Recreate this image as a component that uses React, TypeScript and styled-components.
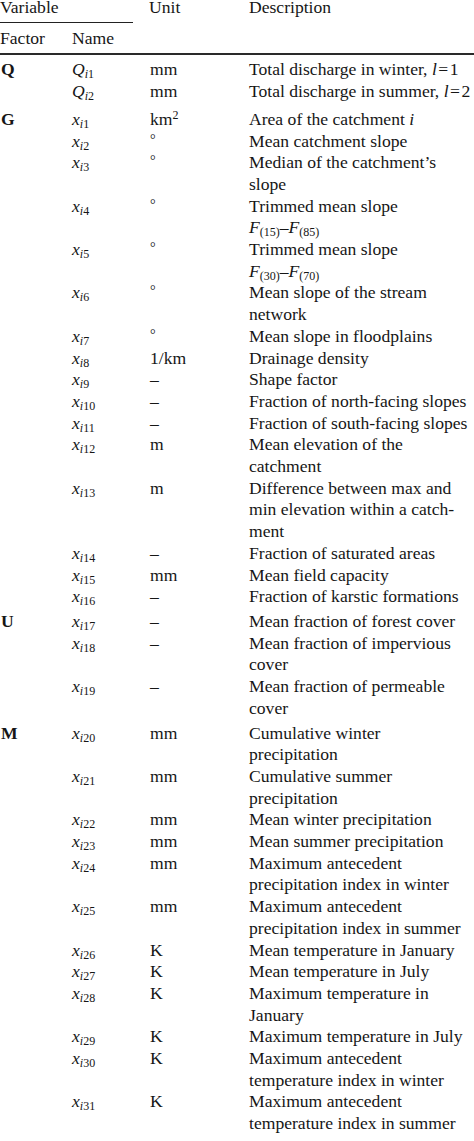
import React from 'react';
import styled, { createGlobalStyle } from 'styled-components';

const GlobalStyle = createGlobalStyle`
  html, body {
    margin: 0;
    padding: 0;
    background: #fff;
  }

  body {
    font-family: "Liberation Serif", "Times New Roman", serif;
    color: #161616;
    overflow: hidden;
  }
`;

const columns = '72px 77px 100px 1fr';

const Table = styled.div`
  width: 474px;
  font-size: 17.6px;
  line-height: 21.7px;
  margin-top: -3px;
`;

const Header = styled.div`
  display: grid;
  grid-template-columns: ${columns};
  border-bottom: 2px solid #2a2a2a;
  padding-bottom: 3px;
`;

const HeadCell = styled.div`
  white-space: nowrap;
  padding-bottom: 3.5px;
`;

const VariableHead = styled(HeadCell)`
  grid-column: 1 / 3;
  width: 133px;
  border-bottom: 1px solid #222;
  margin-bottom: 5px;
`;

const SubHead = styled.div`
  white-space: nowrap;
`;

const GroupBlock = styled.div<{ $gap: number }>`
  padding-top: ${(p) => p.$gap}px;
`;

const Row = styled.div`
  display: grid;
  grid-template-columns: ${columns};
  align-items: start;
`;

const Factor = styled.div`
  font-weight: bold;
  padding-left: 1px;
`;

const Name = styled.div`
  white-space: nowrap;
`;

const Unit = styled.div`
  padding-left: 1px;
  white-space: nowrap;
`;

const Degree = styled.span`
  font-size: 14px;
  line-height: 0;
  vertical-align: 3px;
`;

const Description = styled.div`
  display: flex;
  flex-direction: column;
`;

const Line = styled.span`
  white-space: nowrap;
`;

const It = styled.i`
  font-style: italic;
`;

const Sub = styled.sub`
  font-size: 12px;
  line-height: 0;
  vertical-align: -3px;
`;

const Sup = styled.sup`
  font-size: 12px;
  line-height: 0;
  vertical-align: 6px;
`;

const Eq = styled.span`
  margin: 0 1.5px;
`;

type Entry = {
  n: number;
  unit: React.ReactNode;
  desc: React.ReactNode[];
};

type Group = {
  factor: string;
  symbol: 'Q' | 'x';
  gap: number;
  rows: Entry[];
};

const deg = <Degree>°</Degree>;
const dash = '–';

const Fq = ({ q }: { q: string }) => (
  <>
    <It>F</It>
    <Sub>({q})</Sub>
  </>
);

const groups: Group[] = [
  {
    factor: 'Q',
    symbol: 'Q',
    gap: 4.5,
    rows: [
      {
        n: 1,
        unit: 'mm',
        desc: [
          <>
            Total discharge in winter, <It>l</It>
            <Eq>=</Eq>1
          </>,
        ],
      },
      {
        n: 2,
        unit: 'mm',
        desc: [
          <>
            Total discharge in summer, <It>l</It>
            <Eq>=</Eq>2
          </>,
        ],
      },
    ],
  },
  {
    factor: 'G',
    symbol: 'x',
    gap: 6,
    rows: [
      {
        n: 1,
        unit: (
          <>
            km<Sup>2</Sup>
          </>
        ),
        desc: [
          <>
            Area of the catchment <It>i</It>
          </>,
        ],
      },
      { n: 2, unit: deg, desc: ['Mean catchment slope'] },
      { n: 3, unit: deg, desc: ['Median of the catchment’s', 'slope'] },
      {
        n: 4,
        unit: deg,
        desc: [
          'Trimmed mean slope',
          <>
            <Fq q='15' />
            {dash}
            <Fq q='85' />
          </>,
        ],
      },
      {
        n: 5,
        unit: deg,
        desc: [
          'Trimmed mean slope',
          <>
            <Fq q='30' />
            {dash}
            <Fq q='70' />
          </>,
        ],
      },
      { n: 6, unit: deg, desc: ['Mean slope of the stream', 'network'] },
      { n: 7, unit: deg, desc: ['Mean slope in floodplains'] },
      { n: 8, unit: '1/km', desc: ['Drainage density'] },
      { n: 9, unit: dash, desc: ['Shape factor'] },
      { n: 10, unit: dash, desc: ['Fraction of north-facing slopes'] },
      { n: 11, unit: dash, desc: ['Fraction of south-facing slopes'] },
      { n: 12, unit: 'm', desc: ['Mean elevation of the', 'catchment'] },
      {
        n: 13,
        unit: 'm',
        desc: ['Difference between max and', 'min elevation within a catch-', 'ment'],
      },
      { n: 14, unit: dash, desc: ['Fraction of saturated areas'] },
      { n: 15, unit: 'mm', desc: ['Mean field capacity'] },
      { n: 16, unit: dash, desc: ['Fraction of karstic formations'] },
    ],
  },
  {
    factor: 'U',
    symbol: 'x',
    gap: 3,
    rows: [
      { n: 17, unit: dash, desc: ['Mean fraction of forest cover'] },
      { n: 18, unit: dash, desc: ['Mean fraction of impervious', 'cover'] },
      { n: 19, unit: dash, desc: ['Mean fraction of permeable', 'cover'] },
    ],
  },
  {
    factor: 'M',
    symbol: 'x',
    gap: 3,
    rows: [
      { n: 20, unit: 'mm', desc: ['Cumulative winter', 'precipitation'] },
      { n: 21, unit: 'mm', desc: ['Cumulative summer', 'precipitation'] },
      { n: 22, unit: 'mm', desc: ['Mean winter precipitation'] },
      { n: 23, unit: 'mm', desc: ['Mean summer precipitation'] },
      {
        n: 24,
        unit: 'mm',
        desc: ['Maximum antecedent', 'precipitation index in winter'],
      },
      {
        n: 25,
        unit: 'mm',
        desc: ['Maximum antecedent', 'precipitation index in summer'],
      },
      { n: 26, unit: 'K', desc: ['Mean temperature in January'] },
      { n: 27, unit: 'K', desc: ['Mean temperature in July'] },
      { n: 28, unit: 'K', desc: ['Maximum temperature in', 'January'] },
      { n: 29, unit: 'K', desc: ['Maximum temperature in July'] },
      {
        n: 30,
        unit: 'K',
        desc: ['Maximum antecedent', 'temperature index in winter'],
      },
      {
        n: 31,
        unit: 'K',
        desc: ['Maximum antecedent', 'temperature index in summer'],
      },
    ],
  },
];

export default function App() {
  return (
    <>
      <GlobalStyle />
      <Table>
        <Header>
          <VariableHead>Variable</VariableHead>
          <HeadCell>Unit</HeadCell>
          <HeadCell>Description</HeadCell>
          <SubHead>Factor</SubHead>
          <SubHead>Name</SubHead>
        </Header>

        {groups.map((group) => (
          <GroupBlock key={group.factor} $gap={group.gap}>
            {group.rows.map((row, ri) => (
              <Row key={row.n}>
                <Factor>{ri === 0 ? group.factor : ''}</Factor>
                <Name>
                  <It>{group.symbol}</It>
                  <Sub>
                    <It>i</It>
                    {row.n}
                  </Sub>
                </Name>
                <Unit>{row.unit}</Unit>
                <Description>
                  {row.desc.map((line, li) => (
                    <Line key={li}>{line}</Line>
                  ))}
                </Description>
              </Row>
            ))}
          </GroupBlock>
        ))}
      </Table>
    </>
  );
}
